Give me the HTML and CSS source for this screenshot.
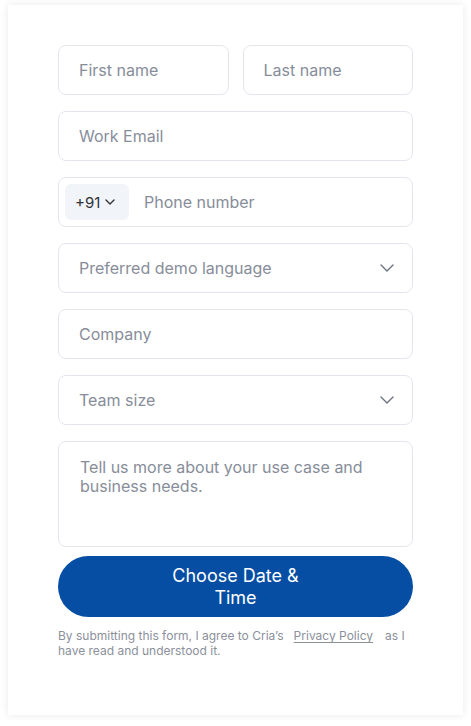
FILE: index.html
```html
<!DOCTYPE html>
<html lang="en">
<head>
<meta charset="utf-8">
<title>Book a demo</title>
<link rel="stylesheet" href="styles.css">
</head>
<body>
<div class="card">
  <form class="form">
    <div class="row">
      <div class="field"><span class="ph">First name</span></div>
      <div class="field"><span class="ph">Last name</span></div>
    </div>
    <div class="field"><span class="ph">Work Email</span></div>
    <div class="field phone">
      <div class="cc"><span class="cc-text">+91</span>
        <svg class="cc-chev" width="10" height="6" viewBox="0 0 10 6"><path d="M1 1l4 4 4-4" fill="none" stroke="#333" stroke-width="1.4" stroke-linecap="round" stroke-linejoin="round"/></svg>
      </div>
      <span class="ph">Phone number</span>
    </div>
    <div class="field select"><span class="ph">Preferred demo language</span>
      <svg class="chev" width="14" height="8" viewBox="0 0 14 8"><path d="M1 1l6 6 6-6" fill="none" stroke="#6b7280" stroke-width="1.4" stroke-linecap="round" stroke-linejoin="round"/></svg>
    </div>
    <div class="field"><span class="ph">Company</span></div>
    <div class="field select"><span class="ph">Team size</span>
      <svg class="chev" width="14" height="8" viewBox="0 0 14 8"><path d="M1 1l6 6 6-6" fill="none" stroke="#6b7280" stroke-width="1.4" stroke-linecap="round" stroke-linejoin="round"/></svg>
    </div>
    <div class="field area"><span class="ph">Tell us more about your use case and business needs.</span></div>
    <button type="button" class="submit"><span class="submit-text">Choose Date &amp; Time</span></button>
    <p class="terms"><span>By submitting this form, I agree to Cria’s</span><a class="link">Privacy Policy</a><span>as I</span> <span>have read and understood it.</span></p>
  </form>
</div>
</body>
</html>
```

FILE: styles.css
```css
* { box-sizing: border-box; }
html, body { margin: 0; background: #ffffff; }
body {
  padding: 5px 8px;
  font-family: Inter, "Noto Sans", sans-serif;
}
.card {
  width: 455px;
  height: 710px;
  background: #fff;
  box-shadow: 0 0 8px rgba(0, 0, 0, 0.09);
  padding: 40px 50px 0;
}
.form {
  display: flex;
  flex-direction: column;
  gap: 16px;
}
.row {
  display: flex;
  gap: 14px;
}
.row .field { flex: 1; }
.field {
  height: 50px;
  border: 1px solid #e3e7ed;
  border-radius: 8px;
  display: flex;
  align-items: center;
  padding: 0 20px;
  background: #fff;
}
.ph {
  font-size: 16px;
  color: #878d9a;
  line-height: 19px;
}
.phone { padding: 0 6px; gap: 15px; }
.cc {
  width: 64px;
  height: 36px;
  background: #f1f4f8;
  border-radius: 6px;
  display: flex;
  align-items: center;
  padding-left: 10px;
  gap: 5px;
}
.cc-text { font-size: 15px; color: #2e3138; }
.select { justify-content: space-between; padding-right: 18px; }
.chev { display: block; }
.area {
  height: 106px;
  align-items: flex-start;
  padding-top: 16px;
  padding-left: 21px;
  padding-right: 40px;
}
.submit {
  margin-top: -7px;
  height: 61px;
  border: 0;
  border-radius: 31px;
  background: #054ea4;
  color: #fff;
  font-family: inherit;
  font-size: 18px;
  line-height: 22px;
  display: flex;
  align-items: center;
  justify-content: center;
  padding: 0;
}
.submit-text { display: inline-block; max-width: 140px; text-align: center; }
.terms {
  margin: -5px 0 0;
  font-size: 12px;
  line-height: 15px;
  color: #8b909b;
  padding-right: 6px;
}
.link {
  color: #8b909b;
  text-decoration: underline;
  text-underline-offset: 2px;
  padding: 0 12px 0 10px;
}
```
